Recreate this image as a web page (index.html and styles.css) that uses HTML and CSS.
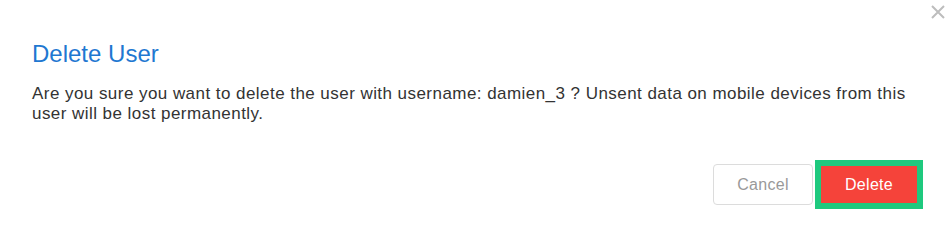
FILE: index.html
```html
<!DOCTYPE html>
<html lang="en">
<head>
    <meta charset="UTF-8">
    <meta name="viewport" content="width=device-width, initial-scale=1.0">
    <title>Delete User</title>
    <link rel="stylesheet" href="styles.css">
</head>
<body>
    <div class="modal">
        <button class="close" aria-label="Close">
            <svg width="14" height="14" viewBox="0 0 14 14">
                <path d="M1 1 L13 13 M13 1 L1 13" stroke="#bdbdbd" stroke-width="2" fill="none"/>
            </svg>
        </button>

        <h2 class="title">Delete User</h2>

        <p class="message">Are you sure you want to delete the user with username: damien_3 ? Unsent data on mobile devices from this user will be lost permanently.</p>

        <div class="footer">
            <button class="btn cancel">Cancel</button>
            <button class="btn delete">Delete</button>
        </div>
    </div>
</body>
</html>
```

FILE: styles.css
```css
body {
    margin: 0;
    font-family: 'Liberation Sans', Arial, sans-serif;
    background: #fff;
}

.modal {
    position: relative;
    width: 952px;
    height: 246px;
    box-sizing: border-box;
    padding: 41px 29px 0 32px;
}

/* Close icon */
.close {
    position: absolute;
    top: 5px;
    right: 7px;
    padding: 0;
    border: none;
    background: none;
    cursor: pointer;
}

.close svg {
    display: block;
}

/* Title */
.title {
    margin: 0;
    font-size: 24px;
    font-weight: normal;
    line-height: 26px;
    color: #1f78d1;
}

/* Body text */
.message {
    margin: 17px 0 0;
    font-size: 17px;
    letter-spacing: 0.45px;
    line-height: 20px;
    color: #333;
    padding-right: 12px;
}

/* Buttons */
.footer {
    display: flex;
    justify-content: flex-end;
    align-items: center;
    gap: 2px;
    margin-top: 36px;
}

.btn {
    font-family: 'Liberation Sans', Arial, sans-serif;
    font-size: 16px;
    letter-spacing: 0.3px;
    cursor: pointer;
}

.cancel {
    width: 100px;
    height: 41px;
    background: #fff;
    color: #999;
    border: 1px solid #dcdcdc;
    border-radius: 4px;
}

.delete {
    width: 108px;
    height: 49px;
    background: #f5433a;
    color: #fff;
    border: 6px solid #1ec97e;
    border-radius: 0;
}
```
